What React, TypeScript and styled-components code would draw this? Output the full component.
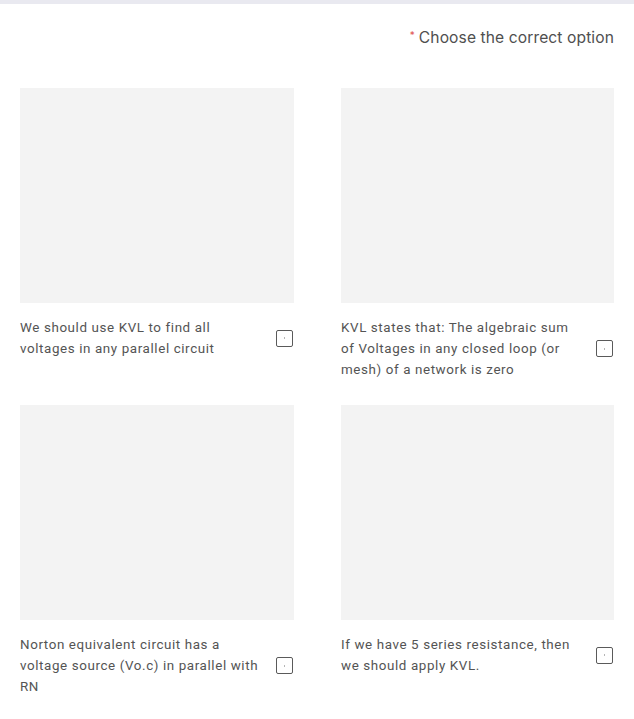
import React from 'react'
import styled, { createGlobalStyle } from 'styled-components'

const GlobalStyle = createGlobalStyle`
  html, body {
    margin: 0;
    padding: 0;
    background: #ffffff;
  }
  body {
    font-family: Roboto, "Liberation Sans", sans-serif;
  }
`

const Page = styled.div`
  width: 634px;
  min-height: 719px;
  box-sizing: border-box;
  border-top: 4px solid #e9e9f0;
  padding: 24px 20px 0 20px;
`

const Hint = styled.div`
  display: flex;
  justify-content: flex-end;
  font-family: Inter, "Open Sans", sans-serif;
  font-size: 15.6px;
  letter-spacing: 0.1px;
  color: #4f4f4f;
  line-height: 20px;
  margin-bottom: 40px;
`

const Star = styled.span`
  color: #e0524f;
  font-size: 10px;
  margin-right: 4px;
  position: relative;
  top: -3px;
`

const Grid = styled.div`
  display: grid;
  grid-template-columns: 274px 273px;
  column-gap: 47px;
  row-gap: 25px;
`

const Card = styled.div`
  display: flex;
  flex-direction: column;
`

const Picture = styled.div`
  height: 215px;
  background: #f3f3f3;
`

const Footer = styled.div`
  display: flex;
  align-items: center;
  justify-content: space-between;
  padding-top: 14px;
`

const Label = styled.div`
  width: 240px;
  font-size: 13.4px;
  letter-spacing: 0.6px;
  line-height: 21px;
  color: #545454;
`

const Check = styled.div`
  width: 15px;
  height: 15px;
  border: 1.6px solid #5a5a5a;
  border-radius: 2px;
  margin-right: 1px;
  display: flex;
  align-items: center;
  justify-content: center;
  flex-shrink: 0;

  &::after {
    content: '';
    width: 1px;
    height: 2px;
    background: #b5b5b5;
  }
`

const options = [
  'We should use KVL to find all voltages in any parallel circuit',
  'KVL states that: The algebraic sum of Voltages in any closed loop (or mesh) of a network is zero',
  'Norton equivalent circuit has a voltage source (Vo.c) in parallel with RN',
  'If we have 5 series resistance, then we should apply KVL.',
]

export default function App() {
  return (
    <>
      <GlobalStyle />
      <Page>
        <Hint>
          <Star>*</Star>Choose the correct option
        </Hint>
        <Grid>
          {options.map((text) => (
            <Card key={text}>
              <Picture />
              <Footer>
                <Label>{text}</Label>
                <Check />
              </Footer>
            </Card>
          ))}
        </Grid>
      </Page>
    </>
  )
}
